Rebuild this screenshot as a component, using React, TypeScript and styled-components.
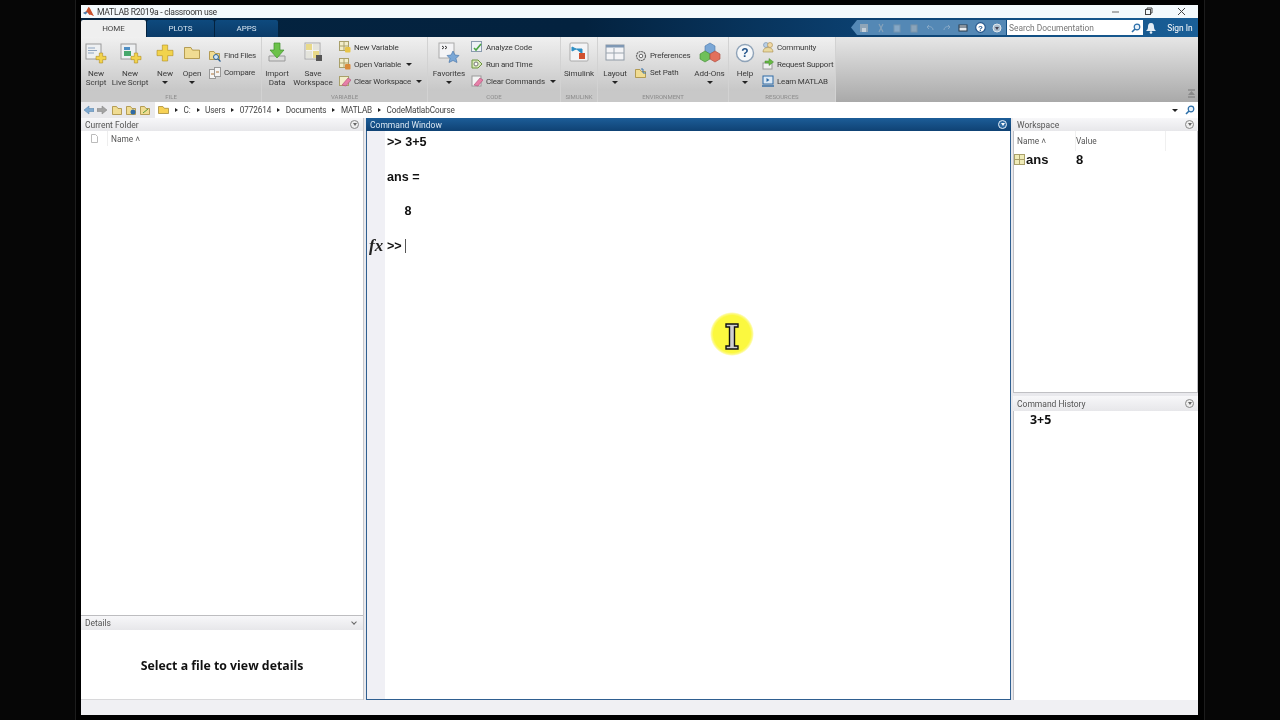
import React from "react";
import styled, { createGlobalStyle } from "styled-components";

const GlobalStyle = createGlobalStyle`
  html, body {
    margin: 0;
    padding: 0;
    background: #000;
  }
  * {
    box-sizing: border-box;
  }
`;

const uiFont = `Roboto, "Liberation Sans", sans-serif`;

const Screen = styled.div`
  position: relative;
  width: 1280px;
  height: 720px;
  overflow: hidden;
  background: #060606;
  padding: 0 75px;
  font-family: ${uiFont};
`;

const Frame = styled.div`
  width: 100%;
  height: 100%;
  padding: 5px 6px 5px 5px;
  background: #000;
  border-left: 1px solid #1c1c1c;
  border-right: 1px solid #1c1c1c;
`;

const Window = styled.div`
  display: flex;
  flex-direction: column;
  width: 100%;
  height: 100%;
  background: #e9e9ed;
  filter: blur(0.3px);
`;

const TitleBar = styled.div`
  display: flex;
  align-items: center;
  height: 13px;
  padding-left: 2px;
  background: #f3f9fc;
  color: #333;
  font-size: 8.6px;
`;

const TitleText = styled.span`
  margin-left: 3px;
  flex: 1;
  letter-spacing: -0.27px;
`;

const WinButton = styled.div`
  display: flex;
  align-items: center;
  justify-content: center;
  width: 33px;
`;

const TabRow = styled.div`
  display: flex;
  align-items: flex-end;
  height: 19px;
  background: linear-gradient(90deg, #04233f 0%, #03223f 45%, #0b4070 70%, #1a5f97 100%);
`;

const Tab = styled.div<{ $active?: boolean; $w: number }>`
  display: flex;
  align-items: center;
  justify-content: center;
  width: ${(p) => p.$w}px;
  height: 17px;
  margin-right: 1px;
  border-radius: 2px 2px 0 0;
  font-size: 8px;
  color: ${(p) => (p.$active ? "#444" : "#d6e4f0")};
  background: ${(p) => (p.$active ? "#efefef" : "linear-gradient(#0e4a7e, #0b3b68)")};
`;

const TabSpacer = styled.div`
  flex: 1;
`;

const QuickBar = styled.div`
  display: flex;
  align-items: center;
  justify-content: space-between;
  align-self: center;
  width: 155px;
  height: 15px;
  padding: 0 4px 0 8px;
  background: #5488b5;
  clip-path: polygon(6px 0, 100% 0, 100% 100%, 6px 100%, 0 50%);
`;

const SearchBox = styled.div`
  display: flex;
  align-items: center;
  justify-content: space-between;
  align-self: center;
  width: 136px;
  height: 15px;
  margin-left: 1px;
  padding: 0 2px;
  background: #fff;
  color: #777;
  font-size: 8.4px;
`;

const Bell = styled.div`
  display: flex;
  align-self: center;
  margin-left: 2px;
`;

const SignIn = styled.div`
  align-self: center;
  width: 36px;
  text-align: center;
  margin-left: 5px;
  color: #fff;
  font-size: 8.4px;
`;

const Ribbon = styled.div`
  position: relative;
  display: flex;
  height: 65px;
  background: linear-gradient(#e6e6e6, #a9a9a9);
`;

const Group = styled.div<{ $w: number }>`
  display: flex;
  flex-direction: column;
  width: ${(p) => p.$w}px;
  border-right: 1px solid #d2d2d2;
  background: linear-gradient(#f0f0f0, #c6c6c6 85%);
`;

const GroupBody = styled.div`
  display: flex;
  flex: 1;
`;

const GroupLabel = styled.div`
  height: 11px;
  line-height: 11px;
  text-align: center;
  font-size: 6px;
  color: #8b8b8b;
  background: #c8c8c8;
`;

const BigButton = styled.div<{ $w: number; $push?: boolean }>`
  display: flex;
  flex-direction: column;
  align-items: center;
  flex: none;
  width: ${(p) => p.$w}px;
  margin-left: ${(p) => (p.$push ? "auto" : "0")};
  padding-top: 5px;
  color: #3a3a3a;
  font-size: 8.1px;
  letter-spacing: -0.08px;
  line-height: 9.5px;
  text-align: center;
  white-space: nowrap;
`;

const BigIcon = styled.div`
  display: flex;
  align-items: center;
  justify-content: center;
  height: 22px;
  margin-bottom: 4.5px;
`;

const Caret = styled.span<{ $inline?: boolean }>`
  display: ${(p) => (p.$inline ? "inline-block" : "block")};
  width: 0;
  height: 0;
  margin: ${(p) => (p.$inline ? "0 0 0 2px" : "3px 0 0")};
  border-left: 3px solid transparent;
  border-right: 3px solid transparent;
  border-top: 3px solid #222;
`;

const SmallColumn = styled.div<{ $ml: number }>`
  display: flex;
  flex-direction: column;
  justify-content: center;
  flex: none;
  height: 54px;
  margin-left: ${(p) => p.$ml}px;
`;

const SmallItem = styled.div`
  display: flex;
  align-items: center;
  gap: 3px;
  height: 17px;
  color: #3a3a3a;
  font-size: 8px;
  letter-spacing: -0.2px;
  white-space: nowrap;
`;

const CollapseMark = styled.div`
  position: absolute;
  right: 2px;
  bottom: 4px;
  line-height: 0;
`;

const AddressBar = styled.div`
  display: flex;
  align-items: center;
  height: 16px;
  background: #e9e9ec;
`;

const NavIcons = styled.div`
  display: flex;
  align-items: center;
  gap: 3px;
  width: 74px;
  padding-left: 3px;
`;

const NavFolders = styled.div`
  display: flex;
  gap: 3px;
  margin-left: 2px;
`;

const PathField = styled.div`
  display: flex;
  align-items: center;
  flex: 1;
  height: 16px;
  padding: 0 3px;
  background: #fff;
  color: #444;
  font-size: 8.2px;
  letter-spacing: -0.12px;
`;

const Crumb = styled.span`
  display: flex;
  align-items: center;
  &::before {
    content: "";
    width: 0;
    height: 0;
    margin: 0 5.5px 0 6px;
    border-top: 2.5px solid transparent;
    border-bottom: 2.5px solid transparent;
    border-left: 3px solid #222;
  }
`;

const PathEnd = styled.div`
  display: flex;
  align-items: center;
  gap: 7px;
  margin-left: auto;
`;

const Panels = styled.div`
  display: flex;
  flex: 1;
  min-height: 0;
  gap: 2px;
`;

const Side = styled.div<{ $w: number }>`
  display: flex;
  flex-direction: column;
  flex: none;
  width: ${(p) => p.$w}px;
  border-right: 1px solid #c8c8cc;
`;

const PanelHeader = styled.div`
  display: flex;
  align-items: center;
  justify-content: space-between;
  flex: none;
  height: 13px;
  padding: 0 4px;
  background: linear-gradient(#f7f7f9, #e7e7ea);
  color: #555;
  font-size: 8.5px;
`;

const HeaderMenu = styled.span<{ $light?: boolean }>`
  display: flex;
  align-items: center;
  justify-content: center;
  width: 9px;
  height: 9px;
  border: 1px solid ${(p) => (p.$light ? "#e8f0f8" : "#888")};
  border-radius: 50%;
  background: ${(p) => (p.$light ? "#2f6ca3" : "#efefef")};
  &::after {
    content: "";
    border-left: 2px solid transparent;
    border-right: 2px solid transparent;
    border-top: 3px solid ${(p) => (p.$light ? "#fff" : "#666")};
  }
`;

const FileHeadRow = styled.div`
  display: flex;
  align-items: center;
  flex: none;
  height: 15px;
  background: #fff;
  color: #555;
  font-size: 8.3px;
`;

const FileCheck = styled.div`
  display: flex;
  align-items: center;
  justify-content: center;
  width: 27px;
  height: 100%;
  border-right: 1px solid #eee;
  margin-right: 3px;
`;

const FolderBody = styled.div`
  flex: 1;
  background: #fff;
`;

const DetailsHeader = styled(PanelHeader)`
  height: 15px;
  padding-bottom: 1px;
  border-top: 1px solid #bdbdc0;
`;

const Chevron = styled.span`
  width: 4px;
  height: 4px;
  margin: 0 3px 2px 0;
  border-right: 1px solid #666;
  border-bottom: 1px solid #666;
  transform: rotate(45deg);
`;

const DetailsBody = styled.div`
  display: flex;
  align-items: center;
  justify-content: center;
  flex: none;
  height: 70px;
  padding-top: 1px;
  background: #fff;
  border-bottom: 1px solid #d8d8da;
  color: #111;
  font-family: "Open Sans", sans-serif;
  font-size: 12.3px;
  font-weight: 700;
`;

const CommandPanel = styled.div`
  display: flex;
  flex-direction: column;
  flex: none;
  width: 645px;
  border: 1px solid #2f5f90;
  border-top: none;
`;

const CommandHeader = styled.div`
  display: flex;
  align-items: center;
  justify-content: space-between;
  flex: none;
  height: 13px;
  margin: 0 -1px;
  padding: 0 4px;
  background: linear-gradient(#1c5d98, #0f4274);
  color: #d8e6f2;
  font-size: 8.5px;
`;

const ConsoleBody = styled.div`
  display: flex;
  flex: 1;
  background: #fff;
`;

const Gutter = styled.div`
  width: 18px;
  padding-top: 3.4px;
  background: #f0f0f5;
`;

const GutterLine = styled.div`
  height: 17.2px;
  line-height: 16px;
  white-space: nowrap;
  font-family: "Liberation Serif", serif;
  font-size: 17px;
  font-style: italic;
  font-weight: 700;
  color: #222;
  padding-left: 2px;
`;

const Code = styled.div`
  padding: 3.4px 0 0 2px;
`;

const CodeLine = styled.div`
  display: flex;
  height: 17.2px;
  line-height: 17.2px;
  white-space: pre;
  font-family: "Liberation Sans", sans-serif;
  font-size: 12.6px;
  font-weight: 700;
  color: #111;
`;

const TextCursor = styled.span`
  width: 1px;
  height: 14px;
  margin: 1px 0 0 3.4px;
  background: #555;
`;

const RightSide = styled.div`
  display: flex;
  flex-direction: column;
  flex: 1;
  min-width: 0;
`;

const WorkspaceBox = styled.div`
  display: flex;
  flex-direction: column;
  flex: none;
  height: 262px;
  background: #fff;
  border: 1px solid #c0c0c4;
  border-top: none;
`;

const WorkspaceHead = styled.div`
  display: flex;
  align-items: center;
  height: 20px;
  color: #555;
  font-size: 8.3px;
  padding-left: 3px;
`;

const ColumnName = styled.span<{ $w: number }>`
  width: ${(p) => p.$w}px;
  height: 100%;
  line-height: 20px;
  border-right: 1px solid #f0f0f0;
`;

const VariableRow = styled.div`
  display: flex;
  align-items: center;
  height: 17px;
  font-family: "Liberation Sans", sans-serif;
  font-size: 13px;
  font-weight: 700;
  color: #111;
`;

const VarName = styled.span`
  width: 50px;
  margin-left: 1px;
`;

const HistoryHeader = styled(PanelHeader)`
  height: 15px;
  margin-top: 3px;
`;

const HistoryBody = styled.div`
  flex: 1;
  padding: 1px 0 0 16px;
  background: #fff;
  border-left: 1px solid #c0c0c4;
  font-family: "Open Sans", sans-serif;
  font-size: 12.4px;
  font-weight: 700;
  color: #111;
  line-height: 16px;
`;

const StatusBar = styled.div`
  flex: none;
  height: 15px;
  background: #f0f0f3;
`;

const Highlight = styled.div`
  position: absolute;
  left: 710px;
  top: 312px;
  display: flex;
  align-items: center;
  justify-content: center;
  width: 44px;
  height: 44px;
  padding-top: 4px;
  border-radius: 50%;
  background: radial-gradient(circle closest-side, #fbf83f 0%, #fbf83f 84%, #fdfa8a 93%, #ffffff 100%);
`;

/* ---- ribbon drawings ---- */

const Ic = ({ s = 12, w, children }: { s?: number; w?: number; children: React.ReactNode }) => (
  <svg width={w ?? s} height={s} viewBox={`0 0 ${w ?? s} ${s}`}>
    {children}
  </svg>
);

const YellowPlus = ({ x, y, r }: { x: number; y: number; r: number }) => (
  <path
    d={`M${x - r / 3} ${y - r}h${(r * 2) / 3}v${(r * 2) / 3}h${(r * 2) / 3}v${(r * 2) / 3}h${-(r * 2) / 3}v${(r * 2) / 3}h${-(r * 2) / 3}v${-(r * 2) / 3}h${-(r * 2) / 3}v${-(r * 2) / 3}h${(r * 2) / 3}z`}
    fill="#f2d34c"
    stroke="#b08d22"
    strokeWidth={0.6}
  />
);

const NewScriptIcon = () => (
  <Ic s={22} w={24}>
    <rect x={2} y={2} width={15} height={15} fill="#eef0f2" stroke="#9a9a9a" />
    <path d="M4 6h7M4 8.500h9M4 11h6" stroke="#8da4c0" strokeWidth={1} />
    <YellowPlus x={17} y={16} r={5} />
  </Ic>
);

const LiveScriptIcon = () => (
  <Ic s={22} w={24}>
    <rect x={3} y={2} width={15} height={15} fill="#eef0f2" stroke="#9a9a9a" />
    <rect x={6} y={5} width={6} height={3} fill="#4f8fc4" />
    <rect x={6} y={9} width={7} height={5} fill="#46a86b" />
    <YellowPlus x={18} y={16} r={5} />
  </Ic>
);

const BigPlusIcon = () => (
  <Ic s={22} w={20}>
    <YellowPlus x={10} y={11} r={8} />
  </Ic>
);

const FolderShape = ({ x = 0, y = 0, w, h, fill = "#f0dc92" }: { x?: number; y?: number; w: number; h: number; fill?: string }) => (
  <path
    d={`M${x + 0.5} ${y + 1.5}h${w * 0.4}l1.500 ${h * 0.2}h${w * 0.6 - 2.5}v${h * 0.8 - 2}h${-w + 1}z`}
    fill={fill}
    stroke="#a78c3a"
    strokeWidth={0.8}
  />
);

const OpenIcon = () => (
  <Ic s={22} w={18}>
    <FolderShape x={1} y={4} w={16} h={13} />
  </Ic>
);

const FindIcon = () => (
  <Ic s={12}>
    <FolderShape w={11} h={10} />
    <circle cx={7} cy={7} r={2.500} fill="#cfe6f7" stroke="#2a5f92" />
    <path d="M9 9l2.500 2.500" stroke="#2a5f92" strokeWidth={1.200} />
  </Ic>
);

const CompareIcon = () => (
  <Ic s={12}>
    <rect x={0.500} y={2.500} width={6} height={9} fill="#f4f4f4" stroke="#999" />
    <rect x={5.500} y={0.500} width={6} height={9} fill="#f4f4f4" stroke="#999" />
    <path d="M7 5h3M2 7h3" stroke="#b0763a" />
  </Ic>
);

const ImportIcon = () => (
  <Ic s={22} w={20}>
    <path d="M2 14h16v5H2z" fill="#dcdcdc" stroke="#999" />
    <path d="M7 1h6v7h4l-7 8-7-8h4z" fill="#6cc24a" stroke="#3f8f2c" strokeWidth={0.7} />
  </Ic>
);

const SaveWorkspaceIcon = () => (
  <Ic s={22} w={20}>
    <rect x={2} y={1} width={15} height={16} fill="#f4f4f4" stroke="#aaa" />
    <rect x={3} y={2} width={6} height={6} fill="#e8d98a" />
    <rect x={10} y={2} width={6} height={6} fill="#e4e4dc" />
    <rect x={3} y={9} width={6} height={7} fill="#e4e4dc" />
    <rect x={10} y={9} width={6} height={7} fill="#e8d98a" />
    <rect x={13} y={13} width={6} height={6} fill="#555" />
  </Ic>
);

const GridIcon = ({ accent }: { accent: string }) => (
  <Ic s={12}>
    <rect x={0.500} y={0.500} width={9} height={9} fill="#f2eecb" stroke="#a9a06a" />
    <path d="M5 1v8M1 5h8" stroke="#a9a06a" />
    <rect x={6} y={6} width={5.500} height={5.500} rx={1} fill={accent} />
  </Ic>
);

const EraserIcon = ({ page = false }: { page?: boolean }) => (
  <Ic s={12}>
    {page && <rect x={1} y={1} width={9} height={10} fill="#f4f4f4" stroke="#999" />}
    {!page && <rect x={0.500} y={1.500} width={9} height={9} fill="#f2eecb" stroke="#a9a06a" />}
    <path d="M3 10l6-7 3 2-5 6z" fill="#e77fa8" stroke="#b04e77" strokeWidth={0.6} />
  </Ic>
);

const FavoritesIcon = () => (
  <Ic s={22} w={22}>
    <rect x={1} y={1} width={15} height={15} fill="#f4f4f6" stroke="#aaa" />
    <path d="M4 4l2 1.500L4 7M7 4l2 1.500L7 7" stroke="#333" fill="none" />
    <path d="M15 9l2 4 4 .5-3 3 1 4-4-2-4 2 1-4-3-3 4-.5z" fill="#7aa7d6" stroke="#3f6fa5" strokeWidth={0.6} />
  </Ic>
);

const AnalyzeIcon = () => (
  <Ic s={12}>
    <rect x={0.500} y={0.500} width={10} height={10} fill="#eef2f6" stroke="#8a9bad" />
    <path d="M3 7l2 2 5-6" stroke="#4ca544" strokeWidth={1.600} fill="none" />
  </Ic>
);

const RunTimeIcon = () => (
  <Ic s={12}>
    <path d="M1 2l6 0 4 4-4 4H1z" fill="#d7e9b8" stroke="#6d9440" />
    <circle cx={5} cy={6} r={2} fill="#fff" stroke="#777" />
  </Ic>
);

const SimulinkIcon = () => (
  <Ic s={22} w={20}>
    <rect x={1} y={1} width={18} height={18} rx={1} fill="#f4f4f6" stroke="#aaa" />
    <path d="M3 5l4 2-4 2zM7 7h6v5" fill="#2f8fc4" stroke="#2f8fc4" />
    <rect x={10} y={11} width={6} height={6} fill="#d0502f" />
  </Ic>
);

const LayoutIcon = () => (
  <Ic s={22} w={20}>
    <rect x={1} y={3} width={18} height={15} fill="#f4f4f6" stroke="#8f9aa5" />
    <rect x={1} y={3} width={18} height={2.500} fill="#7f98b4" />
    <path d="M9 6v12M1 11h18" stroke="#9aa4ae" />
  </Ic>
);

const GearIcon = () => (
  <Ic s={12}>
    <circle cx={6} cy={6} r={4.500} fill="#e4e4e4" stroke="#666" strokeWidth={1.200} strokeDasharray="2 0.6" />
    <circle cx={6} cy={6} r={1.800} fill="#fff" stroke="#666" />
  </Ic>
);

const SetPathIcon = () => (
  <Ic s={12}>
    <FolderShape y={1} w={11} h={10} />
    <path d="M6 2h2v4h3" stroke="#3a74ad" fill="none" />
  </Ic>
);

const AddOnsIcon = () => (
  <Ic s={22} w={22}>
    <path d="M11 1l5 3v5l-5 3-5-3V4z" fill="#7aa7d6" stroke="#4a76a8" strokeWidth={0.6} />
    <path d="M6 9l5 3v5l-5 3-5-3v-5z" fill="#6fc05a" stroke="#428a34" strokeWidth={0.6} />
    <path d="M16 9l5 3v5l-5 3-5-3v-5z" fill="#e2705c" stroke="#a8483a" strokeWidth={0.6} />
  </Ic>
);

const HelpIcon = () => (
  <Ic s={20} w={20}>
    <circle cx={10} cy={10} r={8.500} fill="#f6f8fa" stroke="#8fa3b8" strokeWidth={1.400} />
    <text x={10} y={14} textAnchor="middle" fontSize={12} fontWeight={700} fontFamily="Liberation Sans" fill="#24558b">
      ?
    </text>
  </Ic>
);

const CommunityIcon = () => (
  <Ic s={12}>
    <circle cx={4} cy={4} r={2.500} fill="#b9cfe4" stroke="#6f8cab" strokeWidth={0.6} />
    <circle cx={8} cy={4} r={2.500} fill="#f1d9a6" stroke="#a98c4a" strokeWidth={0.6} />
    <path d="M1 11c0-3 2-4.500 5-4.500s5 1.500 5 4.500z" fill="#e9d9a0" stroke="#a98c4a" strokeWidth={0.6} />
  </Ic>
);

const SupportIcon = () => (
  <Ic s={12}>
    <rect x={1} y={5} width={9} height={6} fill="#f0f0f0" stroke="#999" />
    <path d="M3 5V3h4V0.500L11.500 4 7 7.500V5z" fill="#68b945" stroke="#418a2a" strokeWidth={0.5} />
  </Ic>
);

const LearnIcon = () => (
  <Ic s={12}>
    <rect x={1} y={1} width={10} height={8} fill="#dbe8f4" stroke="#2f6aa5" />
    <path d="M4.500 3l3 2-3 2z" fill="#2f6aa5" />
    <path d="M0 11h12" stroke="#2f6aa5" strokeWidth={1.400} />
  </Ic>
);

const Magnifier = ({ color = "#2b6ea8" }: { color?: string }) => (
  <Ic s={10}>
    <circle cx={6} cy={4} r={2.800} fill="#e8f2fb" stroke={color} strokeWidth={1.200} />
    <path d="M4 6L1 9" stroke={color} strokeWidth={1.600} />
  </Ic>
);

const MatlabLogo = () => (
  <Ic s={11}>
    <path d="M0 7l3-1.500L5.500 1C7 1 9 7 11 10 9 9.500 8 8 6.500 9L4.500 6.500z" fill="#c8502c" />
    <path d="M0 7l3-1.500L4.500 6.500 2.500 8.500z" fill="#4a7fb0" />
  </Ic>
);

const QuickIcons = () => (
  <>
    <Ic s={10}><rect x={1} y={1} width={8} height={8} fill="#8fa5b8" /><rect x={3} y={5} width={4} height={4} fill="#c5d0da" /></Ic>
    <Ic s={10}><path d="M3 1l4 8M7 1L3 9" stroke="#86a2ba" strokeWidth={1.200} /></Ic>
    <Ic s={10}><rect x={2} y={2} width={6} height={7} fill="#86a8c6" stroke="#7595b2" /></Ic>
    <Ic s={10}><rect x={2} y={2} width={6} height={7} fill="#8aa4ba" stroke="#7a94aa" /></Ic>
    <Ic s={10}><path d="M8 7C8 4 5 3 2 4M2 4l2-2M2 4l2 2" stroke="#86a8c6" fill="none" /></Ic>
    <Ic s={10}><path d="M2 7C2 4 5 3 8 4M8 4L6 2M8 4L6 6" stroke="#86a8c6" fill="none" /></Ic>
    <Ic s={10}><rect x={1} y={2} width={8} height={6} fill="#e9edf1" stroke="#2a3a4a" /><path d="M1 4h8" stroke="#2a3a4a" /></Ic>
    <Ic s={11}><circle cx={5.500} cy={5.500} r={4.800} fill="#fff" stroke="#24558b" strokeWidth={1.200} /><text x={5.500} y={8.500} textAnchor="middle" fontSize={8} fontWeight={700} fontFamily="Liberation Sans" fill="#24558b">?</text></Ic>
    <Ic s={10}><circle cx={5} cy={5} r={4} fill="#a9bccd" stroke="#dfe7ee" /><path d="M3 4h4L5 7z" fill="#445" /></Ic>
  </>
);

const crumbs = ["C:", "Users", "0772614", "Documents", "MATLAB", "CodeMatlabCourse"];
const consoleLines = [">> 3+5", "", "ans =", "", "     8", ""];

const App = () => {
  return (
    <Screen>
      <GlobalStyle />
      <Frame>
        <Window>
          <TitleBar>
            <MatlabLogo />
            <TitleText>MATLAB R2019a - classroom use</TitleText>
            <WinButton>
              <Ic s={9}><path d="M1 5h7" stroke="#666" /></Ic>
            </WinButton>
            <WinButton>
              <Ic s={9}><rect x={1.500} y={2.500} width={5} height={5} fill="none" stroke="#444" /><path d="M3 2V1h5v5H7" stroke="#444" fill="none" /></Ic>
            </WinButton>
            <WinButton>
              <Ic s={9}><path d="M1 1l7 7M8 1L1 8" stroke="#444" /></Ic>
            </WinButton>
          </TitleBar>

          <TabRow>
            <Tab $active $w={65}>HOME</Tab>
            <Tab $w={67}>PLOTS</Tab>
            <Tab $w={63}>APPS</Tab>
            <TabSpacer />
            <QuickBar>
              <QuickIcons />
            </QuickBar>
            <SearchBox>
              Search Documentation
              <Magnifier />
            </SearchBox>
            <Bell>
              <Ic s={12}><path d="M6 1c2.500 0 3 2 3 4s1 3 2 4H1c1-1 2-2 2-4s.5-4 3-4z" fill="#e4edf5" /><circle cx={6} cy={10.500} r={1.300} fill="#e4edf5" /></Ic>
            </Bell>
            <SignIn>Sign In</SignIn>
          </TabRow>

          <Ribbon>
            <Group $w={181}>
              <GroupBody>
                <BigButton $w={30}><BigIcon><NewScriptIcon /></BigIcon>New<br />Script</BigButton>
                <BigButton $w={38}><BigIcon><LiveScriptIcon /></BigIcon>New<br />Live Script</BigButton>
                <BigButton $w={32}><BigIcon><BigPlusIcon /></BigIcon>New<Caret /></BigButton>
                <BigButton $w={22}><BigIcon><OpenIcon /></BigIcon>Open<Caret /></BigButton>
                <SmallColumn $ml={6}>
                  <SmallItem><FindIcon />Find Files</SmallItem>
                  <SmallItem><CompareIcon />Compare</SmallItem>
                </SmallColumn>
              </GroupBody>
              <GroupLabel>FILE</GroupLabel>
            </Group>
            <Group $w={166}>
              <GroupBody>
                <BigButton $w={30}><BigIcon><ImportIcon /></BigIcon>Import<br />Data</BigButton>
                <BigButton $w={42}><BigIcon><SaveWorkspaceIcon /></BigIcon>Save<br />Workspace</BigButton>
                <SmallColumn $ml={5}>
                  <SmallItem><GridIcon accent="#e8c547" />New Variable</SmallItem>
                  <SmallItem><GridIcon accent="#d98a3a" />Open Variable<Caret $inline /></SmallItem>
                  <SmallItem><EraserIcon />Clear Workspace<Caret $inline /></SmallItem>
                </SmallColumn>
              </GroupBody>
              <GroupLabel>VARIABLE</GroupLabel>
            </Group>
            <Group $w={133}>
              <GroupBody>
                <BigButton $w={42}><BigIcon><FavoritesIcon /></BigIcon>Favorites<Caret /></BigButton>
                <SmallColumn $ml={1}>
                  <SmallItem><AnalyzeIcon />Analyze Code</SmallItem>
                  <SmallItem><RunTimeIcon />Run and Time</SmallItem>
                  <SmallItem><EraserIcon page />Clear Commands<Caret $inline /></SmallItem>
                </SmallColumn>
              </GroupBody>
              <GroupLabel>CODE</GroupLabel>
            </Group>
            <Group $w={37}>
              <GroupBody>
                <BigButton $w={36}><BigIcon><SimulinkIcon /></BigIcon>Simulink</BigButton>
              </GroupBody>
              <GroupLabel>SIMULINK</GroupLabel>
            </Group>
            <Group $w={131}>
              <GroupBody>
                <BigButton $w={34}><BigIcon><LayoutIcon /></BigIcon>Layout<Caret /></BigButton>
                <SmallColumn $ml={3}>
                  <SmallItem><GearIcon />Preferences</SmallItem>
                  <SmallItem><SetPathIcon />Set Path</SmallItem>
                </SmallColumn>
                <BigButton $w={38} $push><BigIcon><AddOnsIcon /></BigIcon>Add-Ons<Caret /></BigButton>
              </GroupBody>
              <GroupLabel>ENVIRONMENT</GroupLabel>
            </Group>
            <Group $w={107}>
              <GroupBody>
                <BigButton $w={32}><BigIcon><HelpIcon /></BigIcon>Help<Caret /></BigButton>
                <SmallColumn $ml={1}>
                  <SmallItem><CommunityIcon />Community</SmallItem>
                  <SmallItem><SupportIcon />Request Support</SmallItem>
                  <SmallItem><LearnIcon />Learn MATLAB</SmallItem>
                </SmallColumn>
              </GroupBody>
              <GroupLabel>RESOURCES</GroupLabel>
            </Group>
            <CollapseMark>
              <Ic s={9}><path d="M1 1h7" stroke="#777" /><path d="M4.500 2L8 6H1z" fill="#888" /><path d="M1 8h7" stroke="#777" /></Ic>
            </CollapseMark>
          </Ribbon>

          <AddressBar>
            <NavIcons>
              <Ic s={10}><path d="M0 5l5-4v2.500h5v3H5V9z" fill="#7fa9cf" stroke="#4d7da8" strokeWidth={0.5} /></Ic>
              <Ic s={10}><path d="M10 5L5 1v2.500H0v3h5V9z" fill="#a3a3a3" stroke="#808080" strokeWidth={0.5} /></Ic>
              <NavFolders>
                <Ic s={11}><FolderShape w={10} h={10} /></Ic>
                <Ic s={11}><FolderShape w={10} h={10} /><circle cx={7} cy={7} r={2.500} fill="#2f6aa5" /></Ic>
                <Ic s={11}><FolderShape w={10} h={10} /><path d="M3 8l5-4" stroke="#5a9a3a" /></Ic>
              </NavFolders>
            </NavIcons>
            <PathField>
              <Ic s={10} w={11}><FolderShape w={11} h={9} fill="#f7d154" /></Ic>
              {crumbs.map((c) => (
                <Crumb key={c}>{c}</Crumb>
              ))}
              <PathEnd>
                <Caret $inline />
                <Magnifier />
              </PathEnd>
            </PathField>
          </AddressBar>

          <Panels>
            <Side $w={283}>
              <PanelHeader>
                Current Folder
                <HeaderMenu />
              </PanelHeader>
              <FileHeadRow>
                <FileCheck>
                  <Ic s={9}><path d="M1.500.5h4l2 2v6h-6z" fill="#fff" stroke="#bbb" /></Ic>
                </FileCheck>
                Name ˄
              </FileHeadRow>
              <FolderBody />
              <DetailsHeader>
                Details
                <Chevron />
              </DetailsHeader>
              <DetailsBody>Select a file to view details</DetailsBody>
            </Side>

            <CommandPanel>
              <CommandHeader>
                Command Window
                <HeaderMenu $light />
              </CommandHeader>
              <ConsoleBody>
                <Gutter>
                  {consoleLines.map((_, i) => (
                    <GutterLine key={i} />
                  ))}
                  <GutterLine>fx</GutterLine>
                </Gutter>
                <Code>
                  {consoleLines.map((line, i) => (
                    <CodeLine key={i}>{line}</CodeLine>
                  ))}
                  <CodeLine>
                    {">>"}
                    <TextCursor />
                  </CodeLine>
                </Code>
              </ConsoleBody>
            </CommandPanel>

            <RightSide>
              <PanelHeader>
                Workspace
                <HeaderMenu />
              </PanelHeader>
              <WorkspaceBox>
                <WorkspaceHead>
                  <ColumnName $w={59}>Name ˄</ColumnName>
                  <ColumnName $w={90}>Value</ColumnName>
                </WorkspaceHead>
                <VariableRow>
                  <Ic s={11}><rect x={0.500} y={0.500} width={10} height={10} fill="#f0ecb8" stroke="#a9a06a" /><path d="M5.500 1v9M1 5.500h9" stroke="#a9a06a" /></Ic>
                  <VarName>ans</VarName>
                  8
                </VariableRow>
              </WorkspaceBox>
              <HistoryHeader>
                Command History
                <HeaderMenu />
              </HistoryHeader>
              <HistoryBody>3+5</HistoryBody>
            </RightSide>
          </Panels>
          <StatusBar />
        </Window>
      </Frame>

      <Highlight>
        <svg width={14} height={27} viewBox="0 0 14 27">
          <path d="M1 1h12v3H9.500v19H13v3H1v-3h3.500V4H1z" fill="#cfcfcf" stroke="#111" strokeWidth={1.400} />
        </svg>
      </Highlight>
    </Screen>
  );
};

export default App;
